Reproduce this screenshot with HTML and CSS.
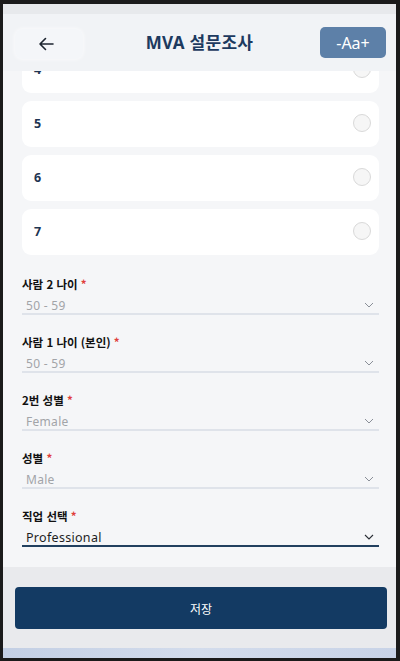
FILE: index.html
```html
<!DOCTYPE html>
<html lang="ko">
<head>
<meta charset="utf-8">
<link rel="stylesheet" href="styles.css">
</head>
<body>
<div class="frame">
  <div class="screen">
    <div class="topstrip"></div>
    <header class="header">
      <button class="back" aria-label="back">
        <svg width="16" height="14" viewBox="0 0 16 14"><path d="M15 7H2M7.5 1.5 2 7l5.5 5.5" fill="none" stroke="#1d2530" stroke-width="1.6" stroke-linecap="round" stroke-linejoin="round"/></svg>
      </button>
      <h1 class="title">MVA 설문조사</h1>
      <button class="fontsize">-Aa+</button>
    </header>
    <main class="content">
      <div class="options">
        <div class="option"><span class="num">4</span><span class="radio"></span></div>
        <div class="option"><span class="num">5</span><span class="radio"></span></div>
        <div class="option"><span class="num">6</span><span class="radio"></span></div>
        <div class="option"><span class="num">7</span><span class="radio"></span></div>
      </div>
      <div class="fields">
        <div class="field">
          <div class="label">사람 2 나이 <span class="req">*</span></div>
          <div class="select"><span>50 - 59</span><svg class="chev" width="10" height="6" viewBox="0 0 10 6"><path d="M1 1l4 4 4-4" fill="none" stroke="#8a8f98" stroke-width="1"/></svg></div>
        </div>
        <div class="field">
          <div class="label">사람 1 나이 (본인) <span class="req">*</span></div>
          <div class="select"><span>50 - 59</span><svg class="chev" width="10" height="6" viewBox="0 0 10 6"><path d="M1 1l4 4 4-4" fill="none" stroke="#8a8f98" stroke-width="1"/></svg></div>
        </div>
        <div class="field">
          <div class="label">2번 성별 <span class="req">*</span></div>
          <div class="select"><span>Female</span><svg class="chev" width="10" height="6" viewBox="0 0 10 6"><path d="M1 1l4 4 4-4" fill="none" stroke="#8a8f98" stroke-width="1"/></svg></div>
        </div>
        <div class="field">
          <div class="label">성별 <span class="req">*</span></div>
          <div class="select"><span>Male</span><svg class="chev" width="10" height="6" viewBox="0 0 10 6"><path d="M1 1l4 4 4-4" fill="none" stroke="#8a8f98" stroke-width="1"/></svg></div>
        </div>
        <div class="field">
          <div class="label">직업 선택 <span class="req">*</span></div>
          <div class="select active"><span>Professional</span><svg class="chev" width="10" height="6" viewBox="0 0 10 6"><path d="M1 1l4 4 4-4" fill="none" stroke="#2a2f36" stroke-width="1.1"/></svg></div>
        </div>
      </div>
    </main>
    <footer class="footer">
      <button class="save">저장</button>
    </footer>
    <div class="bottomstrip"></div>
  </div>
</div>
</body>
</html>
```
FILE: styles.css
```css
* { box-sizing: border-box; }
html, body { margin: 0; padding: 0; }
body {
  width: 400px;
  height: 661px;
  background: #1b1b1b;
  font-family: "Noto Sans", "Noto Sans CJK KR", sans-serif;
  overflow: hidden;
}
.frame {
  width: 400px;
  height: 661px;
  padding: 4px 4px 3px 3px;
}
.screen {
  width: 393px;
  height: 654px;
  display: flex;
  flex-direction: column;
  background: #f5f6f8;
  overflow: hidden;
}
.topstrip {
  height: 10px;
  background: #e7e9ec;
  flex: none;
}
.header {
  height: 57px;
  flex: none;
  background: #f1f3f6;
  display: flex;
  align-items: center;
  justify-content: space-between;
  padding: 0 10px 0 12px;
  position: relative;
}
.back {
  width: 68px;
  height: 30px;
  border: none;
  border-radius: 8px;
  background: #f4f6f9;
  box-shadow: 0 0 4px rgba(255,255,255,0.9);
  display: flex;
  align-items: center;
  padding: 0 0 0 23px;
  margin-top: 2px;
}
.title {
  margin: 0;
  font-family: "Noto Sans", "Noto Sans CJK KR", sans-serif;
  font-size: 17px;
  font-weight: 700;
  color: #1d3a5f;
  letter-spacing: 0.3px;
  position: absolute;
  left: 0;
  right: 0;
  text-align: center;
  top: 18px;
  line-height: 22px;
  pointer-events: none;
}
.fontsize {
  width: 66px;
  height: 31px;
  border: none;
  border-radius: 5px;
  background: #5d80a8;
  color: #ffffff;
  font-family: "Noto Sans", sans-serif;
  font-size: 16px;
  padding: 0;
}
.content {
  flex: 1;
  overflow: hidden;
  padding: 0 17px 0 19px;
}
.options {
  margin-top: -24px;
  display: flex;
  flex-direction: column;
  gap: 8px;
}
.option {
  height: 46px;
  background: #ffffff;
  border-radius: 9px;
  display: flex;
  align-items: center;
  justify-content: space-between;
  padding: 0 8px 2px 12px;
}
.num {
  font-family: "Noto Sans", sans-serif;
  font-size: 12.5px;
  font-weight: 700;
  color: #1f3552;
}
.radio {
  width: 18px;
  height: 18px;
  border-radius: 50%;
  border: 1px solid #d9d9d9;
  background: #f6f6f6;
}
.fields {
  margin-top: 21px;
  display: flex;
  flex-direction: column;
  gap: 19px;
}
.field {
  display: flex;
  flex-direction: column;
}
.label {
  font-family: "Noto Sans CJK KR", "Noto Sans", sans-serif;
  font-size: 11.5px;
  font-weight: 700;
  color: #111111;
  line-height: 16px;
  margin-bottom: 4px;
}
.req { color: #e0403c; }
.select {
  height: 19px;
  display: flex;
  align-items: center;
  justify-content: space-between;
  border-bottom: 2px solid #dfe3ea;
  padding: 1px 5px 0 4px;
  font-family: "Noto Sans", sans-serif;
  font-size: 12px;
  color: #a2a4a8;
  letter-spacing: 0.3px;
}
.select.active {
  color: #1e1e1e;
  border-bottom-color: #22405f;
  font-size: 12.5px;
}
.footer {
  height: 81px;
  flex: none;
  background: #e9eaed;
  padding: 20px 9px 0 12px;
}
.save {
  width: 100%;
  height: 42px;
  border: none;
  border-radius: 4px;
  background: #133a63;
  color: #ffffff;
  font-family: "Noto Sans CJK KR", sans-serif;
  font-size: 12px;
}
.bottomstrip {
  height: 10px;
  flex: none;
  background: linear-gradient(90deg, #c3cfe4, #d3dcec 50%, #c8d3e7);
}
```
